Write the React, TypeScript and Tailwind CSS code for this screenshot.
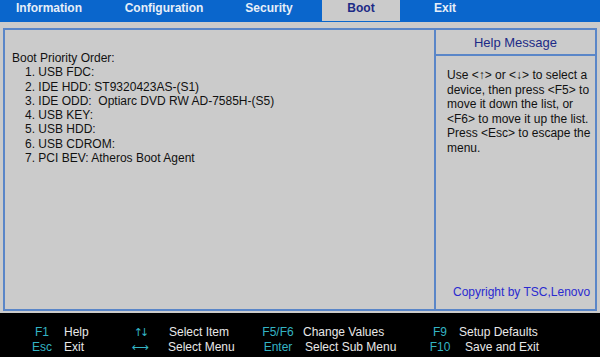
const tabs = [
  { label: 'Information', w: 'w-[96px]', pad: '' },
  { label: 'Configuration', w: 'w-[134px]', pad: '' },
  { label: 'Security', w: 'w-[91px]', pad: 'pr-[15px]' },
  { label: 'Boot', w: 'w-[78px]', pad: '', active: true },
  { label: 'Exit', w: 'w-[90px]', pad: '' },
]

const bootItems = [
  '1. USB FDC:',
  '2. IDE HDD: ST9320423AS-(S1)',
  '3. IDE ODD:  Optiarc DVD RW AD-7585H-(S5)',
  '4. USB KEY:',
  '5. USB HDD:',
  '6. USB CDROM:',
  '7. PCI BEV: Atheros Boot Agent',
]

function KeyRow({
  k1,
  d1,
  k2,
  d2,
  k3,
  d3,
  k4,
  d4,
  second,
}: {
  k1: string
  d1: string
  k2: string
  d2: string
  k3: string
  d3: string
  k4: string
  d4: string
  second?: boolean
}) {
  return (
    <div className="flex h-[15px] items-center pl-[27px] leading-[15px]">
      <span className="w-[30px] text-center text-[#34b4c4]">{k1}</span>
      <span className="w-[66px] pl-[7px]">{d1}</span>
      <span
        className={`w-[34px] text-center text-[#34b4c4] ${second ? '' : 'text-[11px] tracking-[-3px]'}`}
        style={{ fontFamily: '"DejaVu Sans", sans-serif' }}
      >
        {k2}
      </span>
      <span className={`w-[96px] ${second ? 'pl-[11px]' : 'pl-[12px]'}`}>{d2}</span>
      <span className="w-[50px] text-center text-[#34b4c4]">{k3}</span>
      <span className={`w-[122px] ${second ? 'pl-[2px]' : 'pl-0'}`}>{d3}</span>
      <span className="w-[30px] text-center text-[#34b4c4]">{k4}</span>
      <span className={second ? 'pl-[10px]' : 'pl-[4px]'}>{d4}</span>
    </div>
  )
}

export default function App() {
  return (
    <div
      className="flex h-[357px] w-[600px] flex-col overflow-hidden bg-[#cbcbcb]"
      style={{ fontFamily: '"Liberation Sans", Arial, sans-serif' }}
    >
      <div className="flex h-[22px] shrink-0 bg-[#0a66cc] pl-[1px]">
        {tabs.map((t) => (
          <div
            key={t.label}
            className={`${t.w} ${t.pad} flex h-[21px] items-start justify-center pt-[1px] text-[12px] font-bold leading-[14px] ${
              t.active ? 'bg-[#cbcbcb] text-[#1c2a86]' : 'text-[#e6eef8]'
            }`}
          >
            {t.label}
          </div>
        ))}
      </div>

      <div className="flex flex-1 flex-col px-[3px] pb-[2px] pt-[6px]">
        <div className="flex flex-1 border-2 border-[#5a86c8]">
          <div className="w-[431px] border-r-2 border-[#5a86c8] pl-[7px] pt-[21px] text-[12px] leading-[14.3px] text-[#111]">
            <div>Boot Priority Order:</div>
            {bootItems.map((item) => (
              <div key={item} className="whitespace-pre pl-[13px]">
                {item}
              </div>
            ))}
          </div>
          <div className="flex flex-1 flex-col">
            <div className="flex h-[26px] items-center justify-center border-b-2 border-[#5a86c8] pt-[2px] text-[13px] text-[#1c2a86]">
              Help Message
            </div>
            <div className="flex-1 pl-[11px] pt-[12px] text-[12px] leading-[14.6px] text-[#111]">
              Use &lt;↑&gt; or &lt;↓&gt; to select a<br />
              device, then press &lt;F5&gt; to<br />
              move it down the list, or<br />
              &lt;F6&gt; to move it up the list.<br />
              Press &lt;Esc&gt; to escape the<br />
              menu.
            </div>
            <div className="pb-[8px] pl-[17px] text-[12px] text-[#2a2ad0]">Copyright by TSC,Lenovo</div>
          </div>
        </div>
      </div>

      <div className="flex h-[44px] shrink-0 flex-col justify-center bg-black pt-[10px] text-[12px] text-[#e8e8e8]">
        <KeyRow k1="F1" d1="Help" k2="↑↓" d2="Select Item" k3="F5/F6" d3="Change Values" k4="F9" d4="Setup Defaults" />
        <KeyRow
          second
          k1="Esc"
          d1="Exit"
          k2="⟷"
          d2="Select Menu"
          k3="Enter"
          d3="Select Sub Menu"
          k4="F10"
          d4="Save and Exit"
        />
      </div>
    </div>
  )
}
